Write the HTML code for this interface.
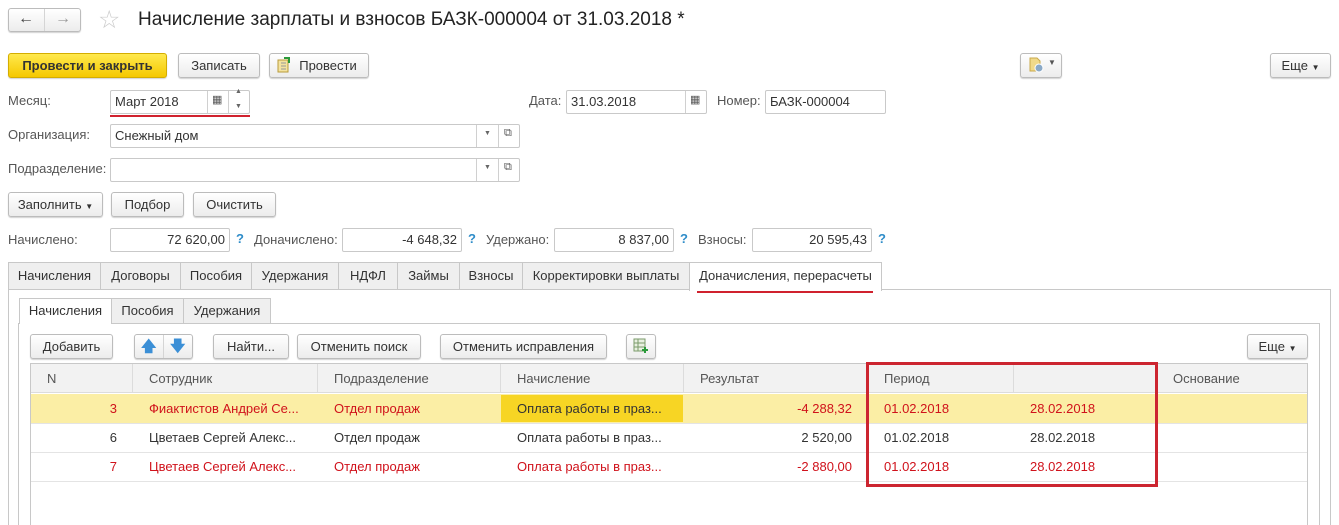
<!DOCTYPE html>
<html><head><meta charset="utf-8"><style>
*{box-sizing:border-box;margin:0;padding:0}
body{width:1339px;height:525px;background:#fff;font-family:"Liberation Sans",Arial,sans-serif;font-size:13px;color:#4d4d4d;position:relative;overflow:hidden}
.a{position:absolute;white-space:nowrap}
.btn{position:absolute;height:25px;border:1px solid #bcbcbc;border-radius:3px;background:linear-gradient(#fff,#ececec);box-shadow:0 1px 1px rgba(0,0,0,.18);color:#333;text-align:center;line-height:23px}
.in{position:absolute;height:24px;border:1px solid #c9c9c9;border-radius:2px;background:#fff;color:#333;line-height:22px;padding:0 4px}
.lbl{position:absolute;color:#555;line-height:16px}
.q{position:absolute;color:#2f8dc9;font-weight:bold}
.tab{position:absolute;top:262px;height:27px;border:1px solid #c8c8c8;border-bottom:none;background:#efefef;text-align:center;line-height:25px;color:#333}
.itab{position:absolute;top:298px;height:25px;border:1px solid #c8c8c8;border-bottom:none;background:#efefef;text-align:center;line-height:23px;color:#333}
.sep{position:absolute;width:1px;background:#c9c9c9}
.hc{position:absolute;top:364px;height:29px;line-height:29px;border-right:1px solid #dcdcdc;padding-left:16px;color:#555}
.c{position:absolute;height:29px;line-height:29px;padding-left:16px}
.r{color:#d0121b}
</style></head><body>
<!-- nav -->
<div class="btn" style="left:8px;top:8px;width:73px;height:24px"></div>
<div class="sep" style="left:44px;top:9px;height:22px;background:#d5d5d5"></div>
<div class="a" style="left:18px;top:10px;font-size:16px;color:#444;font-weight:bold">&#8592;</div>
<div class="a" style="left:55px;top:10px;font-size:16px;color:#999;font-weight:bold">&#8594;</div>
<div class="a" style="left:98px;top:5px;font-size:25px;color:#ccc">&#9734;</div>
<div class="a" style="left:138px;top:9px;font-size:19px;color:#222">Начисление зарплаты и взносов БАЗК-000004 от 31.03.2018 *</div>
<!-- command bar -->
<div class="btn" style="left:8px;top:53px;width:159px;background:linear-gradient(#ffe94d,#f5c800);border-color:#d4ad00;font-weight:bold;color:#333">Провести и закрыть</div>
<div class="btn" style="left:178px;top:53px;width:82px">Записать</div>
<div class="btn" style="left:269px;top:53px;width:100px;padding-left:18px">Провести</div>
<svg class="a" style="left:276px;top:57px" width="16" height="16"><rect x="2" y="3" width="10" height="12" fill="#f4e3a0" stroke="#b99b3a"/><path d="M5 6h5M5 9h5M5 12h5" stroke="#999"/><path d="M8 1l5 0 0 5" stroke="#2a9a3a" stroke-width="2" fill="none"/></svg>
<div class="btn" style="left:1020px;top:53px;width:42px"></div>
<svg class="a" style="left:1028px;top:57px" width="16" height="16"><path d="M2 1h7l3 3v10H2z" fill="#f0d98a" stroke="#c9a94a"/><circle cx="11" cy="11" r="4" fill="#8aa9c7" stroke="#fff"/></svg>
<div class="a" style="left:1048px;top:58px;font-size:8px;color:#555">&#9660;</div>
<div class="btn" style="left:1270px;top:53px;width:61px">Еще <span style="font-size:8px">&#9660;</span></div>
<!-- Month -->
<div class="lbl" style="left:8px;top:93px">Месяц:</div>
<div class="in" style="left:110px;top:90px;width:140px">Март 2018</div>
<div class="sep" style="left:207px;top:91px;height:22px;background:#d0d0d0"></div>
<div class="sep" style="left:228px;top:91px;height:22px;background:#d0d0d0"></div>
<div class="a" style="left:212px;top:93px;font-size:11px;color:#555">&#9638;</div>
<div class="a" style="left:235px;top:88px;font-size:7px;color:#666">&#9650;</div>
<div class="a" style="left:235px;top:103px;font-size:7px;color:#666">&#9660;</div>
<div class="a" style="left:110px;top:115px;width:140px;height:2px;background:#d0212e"></div>
<div class="lbl" style="left:529px;top:93px">Дата:</div>
<div class="in" style="left:566px;top:90px;width:141px">31.03.2018</div>
<div class="sep" style="left:685px;top:91px;height:22px;background:#d0d0d0"></div>
<div class="a" style="left:690px;top:93px;font-size:11px;color:#555">&#9638;</div>
<div class="lbl" style="left:717px;top:93px">Номер:</div>
<div class="in" style="left:765px;top:90px;width:121px">БАЗК-000004</div>
<!-- Org -->
<div class="lbl" style="left:8px;top:127px">Организация:</div>
<div class="in" style="left:110px;top:124px;width:410px">Снежный дом</div>
<div class="sep" style="left:476px;top:125px;height:22px;background:#d0d0d0"></div>
<div class="sep" style="left:498px;top:125px;height:22px;background:#d0d0d0"></div>
<div class="a" style="left:484px;top:130px;font-size:7px;color:#666">&#9660;</div>
<div class="a" style="left:504px;top:127px;font-size:11px;color:#555">&#10697;</div>
<div class="lbl" style="left:8px;top:161px">Подразделение:</div>
<div class="in" style="left:110px;top:158px;width:410px"></div>
<div class="sep" style="left:476px;top:159px;height:22px;background:#d0d0d0"></div>
<div class="sep" style="left:498px;top:159px;height:22px;background:#d0d0d0"></div>
<div class="a" style="left:484px;top:164px;font-size:7px;color:#666">&#9660;</div>
<div class="a" style="left:504px;top:161px;font-size:11px;color:#555">&#10697;</div>
<!-- fill buttons -->
<div class="btn" style="left:8px;top:192px;width:95px">Заполнить <span style="font-size:8px">&#9660;</span></div>
<div class="btn" style="left:111px;top:192px;width:73px">Подбор</div>
<div class="btn" style="left:193px;top:192px;width:83px">Очистить</div>
<!-- totals -->
<div class="lbl" style="left:8px;top:232px">Начислено:</div>
<div class="in" style="left:110px;top:228px;width:120px;text-align:right">72 620,00</div>
<div class="q" style="left:236px;top:231px">?</div>
<div class="lbl" style="left:254px;top:232px">Доначислено:</div>
<div class="in" style="left:342px;top:228px;width:120px;text-align:right">-4 648,32</div>
<div class="q" style="left:468px;top:231px">?</div>
<div class="lbl" style="left:486px;top:232px">Удержано:</div>
<div class="in" style="left:554px;top:228px;width:120px;text-align:right">8 837,00</div>
<div class="q" style="left:680px;top:231px">?</div>
<div class="lbl" style="left:698px;top:232px">Взносы:</div>
<div class="in" style="left:752px;top:228px;width:120px;text-align:right">20 595,43</div>
<div class="q" style="left:878px;top:231px">?</div>
<!-- tabs -->
<div class="a" style="left:8px;top:289px;width:1323px;height:236px;border:1px solid #c8c8c8;border-bottom:none"></div>
<div class="tab" style="left:8px;width:93px">Начисления</div>
<div class="tab" style="left:100px;width:81px">Договоры</div>
<div class="tab" style="left:180px;width:72px">Пособия</div>
<div class="tab" style="left:251px;width:88px">Удержания</div>
<div class="tab" style="left:338px;width:60px">НДФЛ</div>
<div class="tab" style="left:397px;width:63px">Займы</div>
<div class="tab" style="left:459px;width:64px">Взносы</div>
<div class="tab" style="left:522px;width:168px">Корректировки выплаты</div>
<div class="tab" style="left:689px;width:193px;height:29px;background:#fff">Доначисления, перерасчеты</div>
<div class="a" style="left:697px;top:291px;width:176px;height:2px;background:#d0212e"></div>
<!-- inner tabs -->
<div class="a" style="left:18px;top:323px;width:1302px;height:202px;border-top:1px solid #c8c8c8;border-left:1px solid #c8c8c8;border-right:1px solid #c8c8c8"></div>
<div class="itab" style="left:19px;width:93px;height:26px;background:#fff">Начисления</div>
<div class="itab" style="left:111px;width:73px">Пособия</div>
<div class="itab" style="left:183px;width:88px">Удержания</div>
<!-- table buttons -->
<div class="btn" style="left:30px;top:334px;width:83px">Добавить</div>
<div class="btn" style="left:134px;top:334px;width:59px"></div>
<div class="sep" style="left:163px;top:335px;height:23px;background:#d5d5d5"></div>
<div class="a" style="left:141px;top:336px;color:#3b8fd6;font-size:15px;font-weight:bold">&#129093;</div>
<div class="a" style="left:170px;top:336px;color:#3b8fd6;font-size:15px;font-weight:bold">&#129095;</div>
<div class="btn" style="left:213px;top:334px;width:76px">Найти...</div>
<div class="btn" style="left:297px;top:334px;width:124px">Отменить поиск</div>
<div class="btn" style="left:440px;top:334px;width:167px">Отменить исправления</div>
<div class="btn" style="left:626px;top:334px;width:30px"></div>
<svg class="a" style="left:633px;top:338px" width="16" height="16"><rect x="1" y="1" width="11" height="12" fill="#e8f0e0" stroke="#7a9a6a"/><path d="M1 5h11M1 9h11M5 1v12" stroke="#7a9a6a"/><path d="M12 9v6M9 12h6" stroke="#2a9a3a" stroke-width="2"/></svg>
<div class="btn" style="left:1247px;top:334px;width:61px">Еще <span style="font-size:8px">&#9660;</span></div>
<!-- table -->
<div class="a" style="left:30px;top:363px;width:1278px;height:162px;border:1px solid #c8c8c8;border-bottom:none"></div>
<div class="a" style="left:31px;top:364px;width:1276px;height:29px;background:#f2f2f2;border-bottom:1px solid #dcdcdc"></div>
<div class="hc" style="left:31px;width:102px">N</div>
<div class="hc" style="left:133px;width:185px">Сотрудник</div>
<div class="hc" style="left:318px;width:183px">Подразделение</div>
<div class="hc" style="left:501px;width:183px">Начисление</div>
<div class="hc" style="left:684px;width:184px">Результат</div>
<div class="hc" style="left:868px;width:146px">Период</div>
<div class="hc" style="left:1014px;width:143px"></div>
<div class="hc" style="left:1157px;width:150px;border:none">Основание</div>
<!-- rows -->
<div class="a" style="left:31px;top:394px;width:1276px;height:29px;background:#fbeea5"></div>
<div class="a" style="left:501px;top:395px;width:182px;height:27px;background:#f7d524"></div>
<div class="a" style="left:31px;top:423px;width:1276px;height:1px;background:#e4e4e4"></div>
<div class="a" style="left:31px;top:452px;width:1276px;height:1px;background:#e4e4e4"></div>
<div class="a" style="left:31px;top:481px;width:1276px;height:1px;background:#e4e4e4"></div>

<div class="c r" style="left:31px;top:394px;width:86px;text-align:right">3</div>
<div class="c r" style="left:133px;top:394px">Фиактистов Андрей Се...</div>
<div class="c r" style="left:318px;top:394px">Отдел продаж</div>
<div class="c" style="left:501px;top:394px;color:#333">Оплата работы в праз...</div>
<div class="c r" style="left:684px;top:394px;width:168px;text-align:right">-4 288,32</div>
<div class="c r" style="left:868px;top:394px">01.02.2018</div>
<div class="c r" style="left:1014px;top:394px">28.02.2018</div>

<div class="c" style="left:31px;top:423px;width:86px;text-align:right;color:#333">6</div>
<div class="c" style="left:133px;top:423px;color:#333">Цветаев Сергей Алекс...</div>
<div class="c" style="left:318px;top:423px;color:#333">Отдел продаж</div>
<div class="c" style="left:501px;top:423px;color:#333">Оплата работы в праз...</div>
<div class="c" style="left:684px;top:423px;width:168px;text-align:right;color:#333">2 520,00</div>
<div class="c" style="left:868px;top:423px;color:#333">01.02.2018</div>
<div class="c" style="left:1014px;top:423px;color:#333">28.02.2018</div>

<div class="c r" style="left:31px;top:452px;width:86px;text-align:right">7</div>
<div class="c r" style="left:133px;top:452px">Цветаев Сергей Алекс...</div>
<div class="c r" style="left:318px;top:452px">Отдел продаж</div>
<div class="c r" style="left:501px;top:452px">Оплата работы в праз...</div>
<div class="c r" style="left:684px;top:452px;width:168px;text-align:right">-2 880,00</div>
<div class="c r" style="left:868px;top:452px">01.02.2018</div>
<div class="c r" style="left:1014px;top:452px">28.02.2018</div>

<div class="a" style="left:866px;top:362px;width:292px;height:125px;border:3px solid #cc2530"></div>
</body></html>
